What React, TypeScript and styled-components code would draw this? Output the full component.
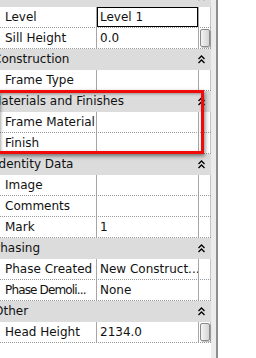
import React from "react";
import styled, { createGlobalStyle } from "styled-components";

const Global = createGlobalStyle`
  html, body { margin: 0; padding: 0; background: #fff; }
  body { width: 256px; height: 358px; overflow: hidden; }
  #root { height: 358px; }
`;

const Frame = styled.div`
  display: flex;
  height: 358px;
  font-family: "DejaVu Sans", "Liberation Sans", sans-serif;
  font-size: 12px;
  color: #111;
`;

const Panel = styled.div`
  position: relative;
  width: 211px;
  flex: none;
  margin-top: -14px;
  background: #fff;
`;

const Gutter = styled.div`
  width: 5px;
  flex: none;
  background: #ececec;
`;

const Edge = styled.div`
  width: 2px;
  flex: none;
  background: #8e8e8e;
`;

const Group = styled.div`
  display: flex;
  align-items: center;
  justify-content: space-between;
  height: 21px;
  background: #dcdcdc;
  overflow: hidden;
  white-space: nowrap;
`;

const GroupTitle = styled.span<{ $shift: number }>`
  margin-left: ${(p) => p.$shift}px;
  line-height: 20px;
  padding-bottom: 1px;
`;

const Collapse = styled.svg`
  width: 7px;
  height: 9px;
  margin-right: 6px;
  flex: none;
`;

const Row = styled.div`
  display: grid;
  grid-template-columns: 96px 102px 13px;
  height: 21px;
  box-sizing: border-box;
  border-bottom: 1px dotted #9a9a9a;
`;

const Label = styled.div<{ $tight?: boolean }>`
  padding-left: 5px;
  line-height: 20px;
  white-space: nowrap;
  overflow: hidden;
  letter-spacing: ${(p) => (p.$tight ? "-0.85px" : "normal")};
`;

const Value = styled.div`
  position: relative;
  border-left: 1px solid #a6a6a6;
  padding-left: 3px;
  line-height: 20px;
  white-space: nowrap;
  overflow: hidden;
`;

const EditBox = styled.div`
  position: absolute;
  left: 0;
  top: 0;
  width: 101px;
  height: 20px;
  box-sizing: border-box;
  border: 1px solid #000;
  padding-left: 2px;
  line-height: 18px;
  background: #fff;
`;

const Side = styled.div`
  display: flex;
  align-items: center;
  border-left: 1px solid #a6a6a6;
  border-right: 1px solid #c4c4c4;
`;

const Thumb = styled.div`
  width: 10px;
  height: 18px;
  margin-left: 1px;
  box-sizing: border-box;
  border: 1px solid #8a8a8a;
  border-radius: 2px;
  background: linear-gradient(to right, #f4f4f4, #d4d4d4);
  box-shadow: 1px 1px 1px rgba(0, 0, 0, 0.25);
`;

const Highlight = styled.div`
  position: absolute;
  left: -3px;
  top: 104px;
  width: 207px;
  height: 64px;
  box-sizing: border-box;
  border: 3px solid #f00a0a;
  box-shadow: 1px 2px 4px rgba(0, 0, 0, 0.5), inset 1px 1px 3px rgba(0, 0, 0, 0.35);
  pointer-events: none;
`;

type Item =
  | { kind: "group"; title: string; shift: number }
  | { kind: "row"; label: string; value?: string; edit?: boolean; thumb?: boolean; tight?: boolean };

const items: Item[] = [
  { kind: "group", title: "Constraints", shift: -6 },
  { kind: "row", label: "Level", value: "Level 1", edit: true },
  { kind: "row", label: "Sill Height", value: "0.0", thumb: true },
  { kind: "group", title: "Construction", shift: -7 },
  { kind: "row", label: "Frame Type" },
  { kind: "group", title: "Materials and Finishes", shift: -9 },
  { kind: "row", label: "Frame Material" },
  { kind: "row", label: "Finish" },
  { kind: "group", title: "Identity Data", shift: -5 },
  { kind: "row", label: "Image" },
  { kind: "row", label: "Comments" },
  { kind: "row", label: "Mark", value: "1" },
  { kind: "group", title: "Phasing", shift: -7 },
  { kind: "row", label: "Phase Created", value: "New Construct..." },
  { kind: "row", label: "Phase Demoli...", value: "None", tight: true },
  { kind: "group", title: "Other", shift: -6 },
  { kind: "row", label: "Head Height", value: "2134.0", thumb: true },
];

const Chevrons = () => (
  <Collapse viewBox="0 0 7 9">
    <path d="M0.5 4 L3.5 1 L6.5 4 M0.5 8 L3.5 5 L6.5 8" fill="none" stroke="#000" strokeWidth="1.3" />
  </Collapse>
);

export default function App() {
  return (
    <>
      <Global />
      <Frame>
        <Panel>
          {items.map((it, i) =>
            it.kind === "group" ? (
              <Group key={i}>
                <GroupTitle $shift={it.shift}>{it.title}</GroupTitle>
                <Chevrons />
              </Group>
            ) : (
              <Row key={i}>
                <Label $tight={it.tight}>{it.label}</Label>
                <Value>{it.edit ? <EditBox>{it.value}</EditBox> : it.value}</Value>
                <Side>{it.thumb && <Thumb />}</Side>
              </Row>
            )
          )}
          <Highlight />
        </Panel>
        <Gutter />
        <Edge />
      </Frame>
    </>
  );
}
